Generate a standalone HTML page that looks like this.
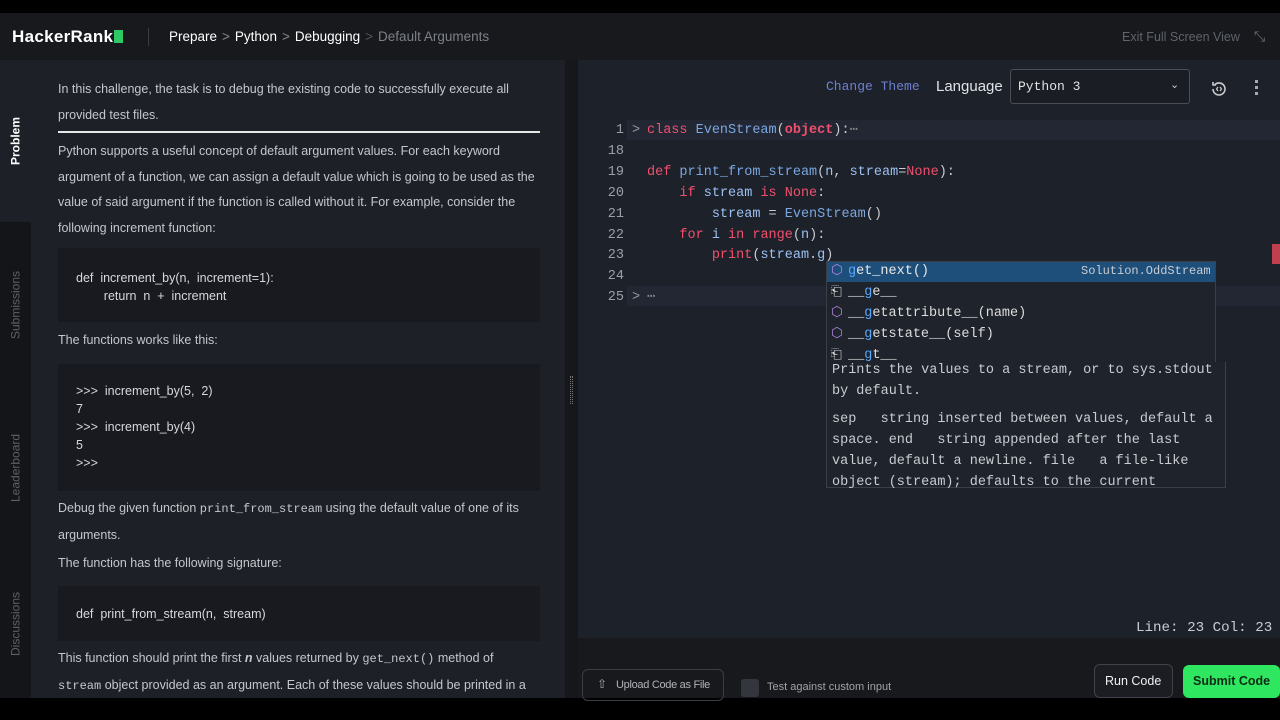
<!DOCTYPE html>
<html><head><meta charset="utf-8"><style>
*{margin:0;padding:0;box-sizing:border-box}
body{width:1280px;height:720px;background:#000;position:relative;overflow:hidden;font-family:"Liberation Sans",sans-serif;color:#c9ccd1}
.abs{position:absolute}
#hdr{left:0;top:13px;width:1280px;height:47px;background:#17191d}
#side{left:0;top:60px;width:31px;height:638px;background:#131518}
.tab{position:absolute;left:0;width:31px;writing-mode:vertical-rl;transform:rotate(180deg);font-size:12px;color:#5c6068;display:flex;align-items:center;justify-content:center}
#left{left:31px;top:60px;width:534px;height:638px;background:#1d2026;overflow:hidden}
#left p{position:absolute;left:27px;font-size:12.5px;color:#c4c7cc;line-height:25.5px;width:480px}
.cb{position:absolute;left:27px;width:482px;background:#181a1f;font-size:12.5px;color:#d6d8dc;padding-left:18px;line-height:18px}
.mono{font-family:"Liberation Mono",monospace;font-size:12px}
#div{left:565px;top:60px;width:13px;height:638px;background:#15171b}
#ed{left:578px;top:60px;width:702px;height:578px;background:#1d212a}
#bot{left:578px;top:638px;width:702px;height:60px;background:#17191d}
.ln{position:absolute;font-family:"Liberation Mono",monospace;font-size:13.5px;white-space:pre;line-height:21px}
.n{color:#9aa0aa;width:50px;text-align:right;left:574px}
.k{color:#f0506e}.f{color:#7aa7e0}.d{color:#c9ccd1}.p{color:#9cc0f0}
.s{margin:0 5px;color:#888}
</style></head><body>
<div class="abs" id="hdr"></div>
<div class="abs" style="left:12px;top:27px;font-size:17px;font-weight:bold;color:#fff;letter-spacing:0.3px">HackerRank<span style="display:inline-block;width:9px;height:13px;background:#2ec866;margin-left:1px;vertical-align:-1px"></span></div>
<div class="abs" style="left:148px;top:28px;width:1px;height:18px;background:#3a3d42"></div>
<div class="abs" style="left:169px;top:29px;font-size:13.5px;color:#fff">Prepare<span class="s">&gt;</span>Python<span class="s">&gt;</span>Debugging<span class="s" style="color:#555">&gt;</span><span style="color:#7c8087">Default Arguments</span></div>
<div class="abs" style="left:1122px;top:30px;font-size:12.5px;color:#5f636a">Exit Full Screen View</div>
<div class="abs" style="left:1254px;top:28px;font-size:14px;color:#6a6e75">⤡</div>

<div class="abs" id="side">
<div class="tab" style="top:0;height:162px;background:#1d2026;color:#fff;font-weight:bold">Problem</div>
<div class="tab" style="top:165px;height:160px">Submissions</div>
<div class="tab" style="top:328px;height:160px">Leaderboard</div>
<div class="tab" style="top:490px;height:148px">Discussions</div>
</div>

<div class="abs" id="left">
<p style="top:17px">In this challenge, the task is to debug the existing code to successfully execute all provided test files.</p>
<div class="abs" style="left:27px;top:71px;width:482px;height:2px;background:#e8e8e8"></div>
<p style="top:79px">Python supports a useful concept of default argument values. For each keyword argument of a function, we can assign a default value which is going to be used as the value of said argument if the function is called without it. For example, consider the following increment function:</p>
<div class="cb" style="top:188px;height:74px;padding-top:21px">def&nbsp; increment_by(n,&nbsp; increment=1):<br>&nbsp;&nbsp;&nbsp;&nbsp;&nbsp;&nbsp;&nbsp; return&nbsp; n&nbsp; +&nbsp; increment</div>
<p style="top:268px">The functions works like this:</p>
<div class="cb" style="top:304px;height:127px;padding-top:18px">&gt;&gt;&gt;&nbsp; increment_by(5,&nbsp; 2)<br>7<br>&gt;&gt;&gt;&nbsp; increment_by(4)<br>5<br>&gt;&gt;&gt;</div>
<p style="top:436px">Debug the given function <span class="mono">print_from_stream</span> using the default value of one of its arguments.</p>
<p style="top:491px">The function has the following signature:</p>
<div class="cb" style="top:526px;height:55px;padding-top:19px">def&nbsp; print_from_stream(n,&nbsp; stream)</div>
<p style="top:586px">This function should print the first <i><b>n</b></i> values returned by <span class="mono">get_next()</span> method of <span class="mono">stream</span> object provided as an argument. Each of these values should be printed in a</p>
</div>

<div class="abs" id="div"><div class="abs" style="left:5px;top:316px;width:3px;height:28px;border-left:1px dotted #777;border-right:1px dotted #777"></div></div>

<div class="abs" id="ed"></div>
<div class="abs" style="left:826px;top:79px;font-family:'Liberation Mono',monospace;font-size:13px;color:#6e7fd0">Change Theme</div>
<div class="abs" style="left:936px;top:78px;font-size:15px;color:#e0e2e5">Language</div>
<div class="abs" style="left:1010px;top:69px;width:180px;height:35px;border:1px solid #4a4e56;border-radius:3px;background:#1a1d24"></div>
<div class="abs" style="left:1018px;top:79px;font-family:'Liberation Mono',monospace;font-size:13px;color:#e0e2e5">Python 3</div>
<div class="abs" style="left:1170px;top:78px;font-size:11px;color:#ccc">⌄</div>
<svg class="abs" style="left:1209px;top:79px" width="20" height="20" viewBox="0 0 20 20"><path d="M4 10a6 6 0 1 0 2-4.5M4 3v3h3" fill="none" stroke="#ccc" stroke-width="1.6"/><path d="M9 8l-1.5 2L9 12M11 8l1.5 2L11 12" fill="none" stroke="#ccc" stroke-width="1.2"/></svg>
<div class="abs" style="left:1255px;top:80px;width:3px;height:3px;background:#aaa;box-shadow:0 6px 0 #aaa,0 12px 0 #aaa"></div>

<div class="abs" style="left:627px;top:120px;width:653px;height:20px;background:#222733"></div>
<div class="abs" style="left:627px;top:286px;width:653px;height:20px;background:#222733"></div>
<div class="ln n" style="top:120px">1</div><div class="ln" style="left:632px;top:120px;color:#999">&gt;</div>
<div class="ln" style="left:647px;top:120px"><span class="k">class</span> <span class="f">EvenStream</span><span class="d">(</span><b class="k">object</b><span class="d">):</span><span style="color:#888">⋯</span></div>
<div class="ln n" style="top:141px">18</div>
<div class="ln n" style="top:162px">19</div>
<div class="ln" style="left:647px;top:162px"><span class="k">def</span> <span class="f">print_from_stream</span><span class="d">(</span><span class="p">n</span><span class="d">, </span><span class="p">stream</span><span class="d">=</span><span class="k">None</span><span class="d">):</span></div>
<div class="ln n" style="top:183px">20</div>
<div class="ln" style="left:647px;top:183px">    <span class="k">if</span> <span class="p">stream</span> <span class="k">is</span> <span class="k">None</span><span class="d">:</span></div>
<div class="ln n" style="top:204px">21</div>
<div class="ln" style="left:647px;top:204px">        <span class="p">stream</span> <span class="d">=</span> <span class="f">EvenStream</span><span class="d">()</span></div>
<div class="ln n" style="top:225px">22</div>
<div class="ln" style="left:647px;top:225px">    <span class="k">for</span> <span class="p">i</span> <span class="k">in</span> <span class="k">range</span><span class="d">(</span><span class="p">n</span><span class="d">):</span></div>
<div class="ln n" style="top:245px">23</div>
<div class="ln" style="left:647px;top:245px">        <span class="k">print</span><span class="d">(</span><span class="p">stream</span><span class="d">.</span><span class="p">g</span><span class="d">)</span></div>
<div class="ln n" style="top:266px">24</div>
<div class="ln n" style="top:287px">25</div><div class="ln" style="left:632px;top:287px;color:#999">&gt;</div><div class="ln" style="left:647px;top:287px;color:#888">⋯</div>
<div class="abs" style="left:1272px;top:244px;width:8px;height:20px;background:#c04050"></div>

<div class="abs" style="left:826px;top:261px;width:390px;height:104px;background:#1f232b;border:1px solid #3a3f4a"></div>
<div class="abs" style="left:827px;top:262px;width:388px;height:20px;background:#1e4f7a"></div>
<div class="abs" style="left:826px;top:362px;width:400px;height:126px;background:#1f232b;border:1px solid #3a3f4a;border-top:none"></div>
<div class="ln" style="left:831px;top:261px;color:#b487e6">⬡</div><div class="ln" style="left:848px;top:261px;color:#e8e8e8"><span style="color:#5aa8ff">g</span>et_next()</div>
<div class="ln" style="left:1081px;top:261px;font-size:12px;color:#c9ccd1">Solution.OddStream</div>
<div class="ln" style="left:831px;top:282px;color:#ddd">⎗</div><div class="ln" style="left:848px;top:282px;color:#ddd">__<span style="color:#5aa8ff">g</span>e__</div>
<div class="ln" style="left:831px;top:303px;color:#b487e6">⬡</div><div class="ln" style="left:848px;top:303px;color:#ddd">__<span style="color:#5aa8ff">g</span>etattribute__(name)</div>
<div class="ln" style="left:831px;top:324px;color:#b487e6">⬡</div><div class="ln" style="left:848px;top:324px;color:#ddd">__<span style="color:#5aa8ff">g</span>etstate__(self)</div>
<div class="ln" style="left:831px;top:345px;color:#ddd">⎗</div><div class="ln" style="left:848px;top:345px;color:#ddd">__<span style="color:#5aa8ff">g</span>t__</div>
<div class="ln" style="left:832px;top:360px;color:#c9ccd1;font-size:13.5px">Prints the values to a stream, or to sys.stdout
by default.</div>
<div class="ln" style="left:832px;top:409px;color:#c9ccd1;font-size:13.5px">sep   string inserted between values, default a
space. end   string appended after the last
value, default a newline. file   a file-like
object (stream); defaults to the current</div>

<div class="ln" style="left:1136px;top:618px;color:#c9ccd1;font-size:14.2px">Line: 23 Col: 23</div>

<div class="abs" id="bot"></div>
<div class="abs" style="left:582px;top:669px;width:142px;height:32px;border:1px solid #3a3d42;border-radius:6px"></div>
<div class="abs" style="left:597px;top:677px;font-size:12px;color:#aaa">⇧</div>
<div class="abs" style="left:616px;top:679px;font-size:11px;color:#b0b3b8;letter-spacing:-0.3px">Upload Code as File</div>
<div class="abs" style="left:741px;top:679px;width:18px;height:18px;background:#33363c;border-radius:3px"></div>
<div class="abs" style="left:767px;top:681px;font-size:11px;color:#a0a3a8">Test against custom input</div>
<div class="abs" style="left:1094px;top:664px;width:79px;height:34px;border:1px solid #3f4248;border-radius:6px;background:#1b1d22"></div>
<div class="abs" style="left:1105px;top:674px;font-size:12.5px;color:#f0f0f0">Run Code</div>
<div class="abs" style="left:1183px;top:665px;width:97px;height:33px;background:#2ee65f;border-radius:6px"></div>
<div class="abs" style="left:1193px;top:674px;font-size:12.5px;color:#0c2a14;font-weight:bold">Submit Code</div>
</body></html>
